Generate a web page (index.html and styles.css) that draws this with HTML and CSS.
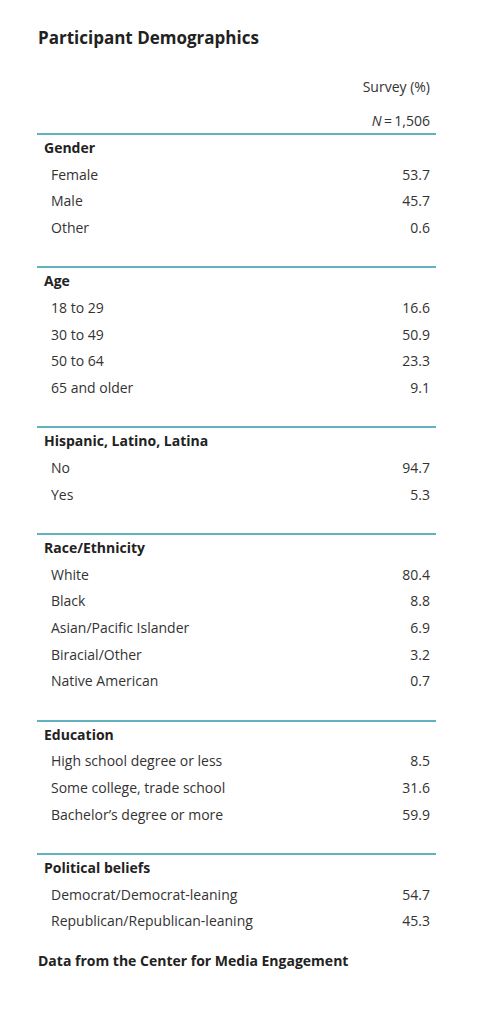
FILE: index.html
```html
<!DOCTYPE html>
<html>
    <head>
        <title>Participant Demographics</title>
        <meta charset="UTF-8">
        <meta name="viewport" content="width=device-width, initial-scale=1.0">
        <link rel="stylesheet" href="styles.css">
    </head>
    <body>
        <div class="figure">
            <h2 class="title">Participant Demographics</h2>

            <div class="colhead survey">Survey (%)</div>
            <div class="colhead count"><i>N</i>&thinsp;=&thinsp;1,506</div>

            <div class="group">
                <div class="group-title">Gender</div>
                <div class="row"><span>Female</span><span>53.7</span></div>
                <div class="row"><span>Male</span><span>45.7</span></div>
                <div class="row"><span>Other</span><span>0.6</span></div>
            </div>

            <div class="group">
                <div class="group-title">Age</div>
                <div class="row"><span>18 to 29</span><span>16.6</span></div>
                <div class="row"><span>30 to 49</span><span>50.9</span></div>
                <div class="row"><span>50 to 64</span><span>23.3</span></div>
                <div class="row"><span>65 and older</span><span>9.1</span></div>
            </div>

            <div class="group">
                <div class="group-title">Hispanic, Latino, Latina</div>
                <div class="row"><span>No</span><span>94.7</span></div>
                <div class="row"><span>Yes</span><span>5.3</span></div>
            </div>

            <div class="group">
                <div class="group-title">Race/Ethnicity</div>
                <div class="row"><span>White</span><span>80.4</span></div>
                <div class="row"><span>Black</span><span>8.8</span></div>
                <div class="row"><span>Asian/Pacific Islander</span><span>6.9</span></div>
                <div class="row"><span>Biracial/Other</span><span>3.2</span></div>
                <div class="row"><span>Native American</span><span>0.7</span></div>
            </div>

            <div class="group">
                <div class="group-title">Education</div>
                <div class="row"><span>High school degree or less</span><span>8.5</span></div>
                <div class="row"><span>Some college, trade school</span><span>31.6</span></div>
                <div class="row"><span>Bachelor&rsquo;s degree or more</span><span>59.9</span></div>
            </div>

            <div class="group last">
                <div class="group-title">Political beliefs</div>
                <div class="row"><span>Democrat/Democrat-leaning</span><span>54.7</span></div>
                <div class="row"><span>Republican/Republican-leaning</span><span>45.3</span></div>
            </div>

            <p class="source">Data from the Center for Media Engagement</p>
        </div>
    </body>
</html>
```

FILE: styles.css
```css
body {
    margin: 0;
    background-color: white;
    color: #333;
    font-family: "Open Sans", "Liberation Sans", sans-serif;
}
.figure {
    width: 399px;
    margin-left: 37px;
    padding-top: 26px;
}
.title {
    margin: 0 0 0 1px;
    font-size: 17px;
    line-height: 24px;
    font-weight: bold;
    color: #222;
}
.colhead {
    text-align: right;
    padding-right: 6px;
    font-size: 14px;
    line-height: 24px;
}
.survey {
    margin-top: 25px;
}
.count {
    margin-top: 10px;
}
.group {
    border-top: 2px solid #62b1c1;
    padding-bottom: 24.67px;
}
.group.last {
    padding-bottom: 14px;
}
.group-title {
    padding-left: 7px;
    font-size: 14px;
    font-weight: bold;
    line-height: 26.67px;
    color: #222;
}
.row {
    display: flex;
    justify-content: space-between;
    padding: 0 6px 0 14px;
    font-size: 14px;
    line-height: 26.67px;
}
.source {
    margin: 0 0 0 1px;
    font-size: 14px;
    font-weight: bold;
    line-height: 24px;
    color: #222;
}
```
